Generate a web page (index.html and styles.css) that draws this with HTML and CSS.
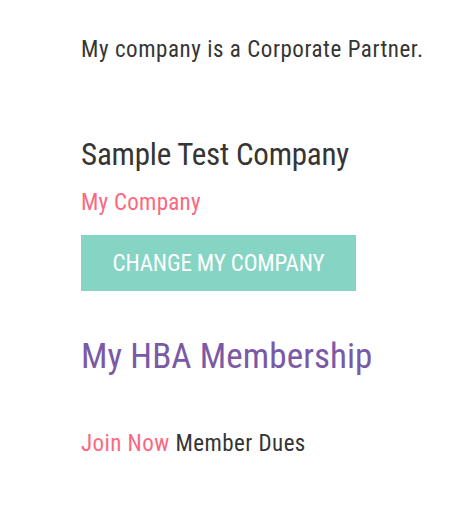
FILE: index.html
```html
<!DOCTYPE html>
<html lang="en">
<head>
<meta charset="utf-8">
<title>My Company</title>
<link rel="stylesheet" href="styles.css">
</head>
<body>
<main class="panel">
  <p class="intro">My company is a Corporate Partner.</p>
  <h2 class="company-name">Sample Test Company</h2>
  <a class="link my-company" href="#">My Company</a>
  <a class="btn" href="#">CHANGE MY COMPANY</a>
  <h1 class="section-title">My HBA Membership</h1>
  <p class="dues"><a class="link" href="#">Join Now</a> Member Dues</p>
</main>
</body>
</html>
```
FILE: styles.css
```css
html, body {
  margin: 0;
  padding: 0;
  background: #ffffff;
}
body {
  font-family: "Roboto Condensed", "Liberation Sans Narrow", "DejaVu Sans Condensed", sans-serif;
  color: #353535;
}
.panel {
  display: flex;
  flex-direction: column;
  align-items: flex-start;
  padding: 35px 0 0 81px;
}
.intro {
  margin: 0;
  font-size: 23px;
  line-height: 30px;
  letter-spacing: 0.55px;
  font-weight: 400;
}
.company-name {
  margin: 72px 0 0;
  font-size: 31px;
  line-height: 36px;
  font-weight: 400;
  letter-spacing: -0.2px;
}
.link {
  color: #fb6880;
  text-decoration: none;
}
.my-company {
  margin-top: 15px;
  font-size: 23px;
  line-height: 30px;
  letter-spacing: 0.25px;
}
.btn {
  margin-top: 17px;
  box-sizing: border-box;
  width: 275px;
  height: 56px;
  display: flex;
  align-items: center;
  justify-content: center;
  background: #85d4c4;
  color: #ffffff;
  text-decoration: none;
  font-size: 23px;
  letter-spacing: -0.15px;
}
.section-title {
  margin: 45px 0 0;
  font-size: 35px;
  line-height: 42px;
  font-weight: 400;
  color: #7a5aa6;
  letter-spacing: 0.1px;
}
.dues {
  margin: 51px 0 0;
  font-size: 23px;
  line-height: 30px;
  letter-spacing: 0.45px;
}
```
